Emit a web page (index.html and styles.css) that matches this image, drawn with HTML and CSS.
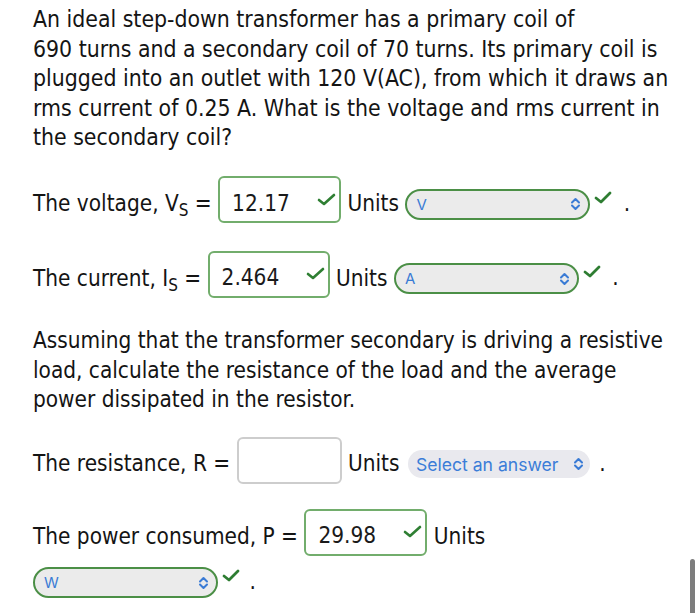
FILE: index.html
```html
<!DOCTYPE html>
<html>
<head>
<meta charset="utf-8">
<link rel="stylesheet" href="styles.css">
</head>
<body>
<div class="page">
  <p class="q">An ideal step-down transformer has a primary coil of<br>690 turns and a secondary coil of 70 turns. Its primary coil is plugged into an outlet with 120 V(AC), from which it draws an rms current of 0.25 A. What is the voltage and rms current in the secondary coil?</p>

  <div class="row r-volt">The voltage, V<span class="sub">S</span> = <span class="field ok w123"><span class="val">12.17</span><svg class="tick" viewBox="0 0 19 13"><path d="M2 7 L7 11 L17 2"/></svg></span> Units <span class="grp"><span class="pill"><span class="pv">V</span><svg class="updown" viewBox="0 0 11 14"><path d="M2 5.5 L5.5 2 L9 5.5 M2 8.5 L5.5 12 L9 8.5"/></svg></span><svg class="tick2" viewBox="0 0 18 13"><path d="M2 7 L7 11 L16 2"/></svg></span> <span class="dot">.</span></div>

  <div class="row r-cur">The current, I<span class="sub">S</span> = <span class="field ok w122"><span class="val">2.464</span><svg class="tick" viewBox="0 0 19 13"><path d="M2 7 L7 11 L17 2"/></svg></span> Units <span class="grp"><span class="pill"><span class="pv">A</span><svg class="updown" viewBox="0 0 11 14"><path d="M2 5.5 L5.5 2 L9 5.5 M2 8.5 L5.5 12 L9 8.5"/></svg></span><svg class="tick2" viewBox="0 0 18 13"><path d="M2 7 L7 11 L16 2"/></svg></span> <span class="dot">.</span></div>

  <p class="q q2">Assuming that the transformer secondary is driving a resistive load, calculate the resistance of the load and the average power dissipated in the resistor.</p>

  <div class="row r-res">The resistance, R = <span class="blank"></span> Units <span class="select"><span class="sv">Select an answer</span><svg class="updown" viewBox="0 0 11 14"><path d="M2 5.5 L5.5 2 L9 5.5 M2 8.5 L5.5 12 L9 8.5"/></svg></span> <span class="dot d2">.</span></div>

  <div class="row r-pow">The power consumed, P = <span class="field ok w123"><span class="val">29.98</span><svg class="tick" viewBox="0 0 19 13"><path d="M2 7 L7 11 L17 2"/></svg></span> Units <span class="grp"><span class="pill"><span class="pv">W</span><svg class="updown" viewBox="0 0 11 14"><path d="M2 5.5 L5.5 2 L9 5.5 M2 8.5 L5.5 12 L9 8.5"/></svg></span><svg class="tick2" viewBox="0 0 18 13"><path d="M2 7 L7 11 L16 2"/></svg></span> <span class="dot d3">.</span></div>
</div>
<div class="scrollbar"></div>
</body>
</html>
```
FILE: styles.css
```css
html, body {
  margin: 0;
  padding: 0;
  background: #ffffff;
}

.page {
  padding: 5px 0 0 33px;
  width: 642px;
  font-family: "DejaVu Sans Condensed", "DejaVu Sans", sans-serif;
  font-stretch: condensed;
  font-size: 22.4px;
  color: #141414;
}

.q {
  margin: 0;
  font-size: 22.8px;
  line-height: 29.5px;
}

.q2 {
  margin-top: 28px;
  font-size: 22.4px;
}

.row {
  line-height: 42px;
}

.r-volt { margin-top: 23.5px; }
.r-cur { margin-top: 27px; }
.r-res { margin-top: 22px; }
.r-pow { margin-top: 25px; line-height: 46px; }

.sub {
  font-size: 17px;
  vertical-align: -5px;
  line-height: 1;
}

.field {
  display: inline-flex;
  align-items: center;
  justify-content: space-between;
  box-sizing: border-box;
  height: 47px;
  padding: 6px 3px 0 12px;
  border: 2px solid #72ad6c;
  border-radius: 6px;
  background: #ffffff;
  vertical-align: baseline;
  line-height: normal;
}

.blank {
  display: inline-block;
  box-sizing: border-box;
  width: 105px;
  height: 47px;
  border: 2px solid #cdcdcd;
  border-radius: 6px;
  background: #ffffff;
  vertical-align: -13px;
}

.w123 { width: 123px; }
.w122 { width: 122px; }

.val {
  color: #1a1a1a;
}

.tick {
  width: 19px;
  height: 13px;
  margin-bottom: 7px;
  fill: none;
  stroke: #2f7f33;
  stroke-width: 2.6;
  stroke-linecap: round;
  stroke-linejoin: round;
}

.grp {
  white-space: nowrap;
}

.pill {
  display: inline-flex;
  align-items: center;
  justify-content: space-between;
  box-sizing: border-box;
  width: 185px;
  height: 31px;
  padding: 0 7px 0 9px;
  border: 2px solid #4b8f46;
  border-radius: 16px;
  background: #ebebeb;
  vertical-align: 1px;
  line-height: normal;
  font-family: "Inter", "DejaVu Sans", sans-serif;
  font-size: 15px;
  color: #3a7bd5;
}

.select {
  display: inline-flex;
  align-items: center;
  justify-content: space-between;
  box-sizing: border-box;
  width: 182px;
  height: 28px;
  margin-left: 2px;
  padding: 0 6px 0 8px;
  border-radius: 14px;
  background: #e9e9ee;
  vertical-align: 0;
  line-height: normal;
  font-family: "Inter", "DejaVu Sans", sans-serif;
  font-size: 17.6px;
  color: #3b7dd8;
}

.updown {
  width: 11px;
  height: 14px;
  fill: none;
  stroke: #3a7bd5;
  stroke-width: 2;
  stroke-linecap: round;
  stroke-linejoin: round;
}

.tick2 {
  width: 18px;
  height: 13px;
  margin-left: 4px;
  vertical-align: 7px;
  fill: none;
  stroke: #2e7d32;
  stroke-width: 2.8;
  stroke-linecap: round;
  stroke-linejoin: round;
}

.dot {
  margin-left: 5px;
}

.d2 {
  margin-left: 3px;
}

.d3 {
  margin-left: 3px;
}

.scrollbar {
  position: fixed;
  right: 5px;
  top: 559px;
  width: 5px;
  height: 60px;
  border-radius: 3px;
  background: #7d7d7d;
}
```
